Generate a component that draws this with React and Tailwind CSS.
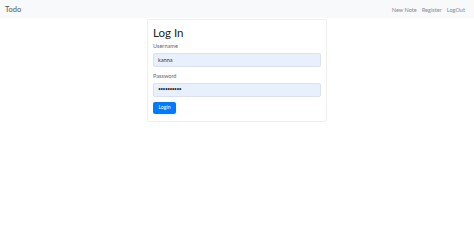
import React from 'react';

export default function App() {
  return (
    <div className="min-h-[247px] bg-white" style={{ fontFamily: 'Lato, "Noto Sans", sans-serif' }}>
      <nav className="h-[18px] bg-[#f8f9fa] flex items-center justify-between pl-[5px] pr-[9px]">
        <span className="text-[7.5px] leading-none text-[#555] pt-[2px]">Todo</span>
        <div className="flex items-center gap-[5px] text-[5.6px] leading-none text-[#8a8a8a] pt-[2px]">
          <span>New Note</span>
          <span>Register</span>
          <span>LogOut</span>
        </div>
      </nav>

      <div className="w-[180px] mx-auto mt-[1px] border border-[#efefef] rounded-[2px] px-[5px] pt-[5px] pb-[7px]">
        <h1 className="text-[11.5px] leading-[15px] text-[#222] font-normal">Log In</h1>
        <label className="block mt-[2px] text-[5.6px] leading-[8px] text-[#666]">Username</label>
        <div className="mt-[3px] h-[14px] rounded-[2px] border border-[#dbe2ea] bg-[#e8f0fe] flex items-center px-[4px] text-[5.6px] text-[#333]">
          kanna
        </div>
        <label className="block mt-[5px] text-[5.6px] leading-[8px] text-[#666]">Password</label>
        <div className="mt-[3px] h-[14px] rounded-[2px] border border-[#dbe2ea] bg-[#e8f0fe] flex items-center px-[4px] text-[5px] text-[#333] tracking-[-0.6px]">
          ••••••••••
        </div>
        <button className="mt-[5px] h-[12px] w-[23px] rounded-[2px] bg-[#007bff] text-white text-[5.2px] leading-none flex items-center justify-center">
          Login
        </button>
      </div>
    </div>
  );
}
